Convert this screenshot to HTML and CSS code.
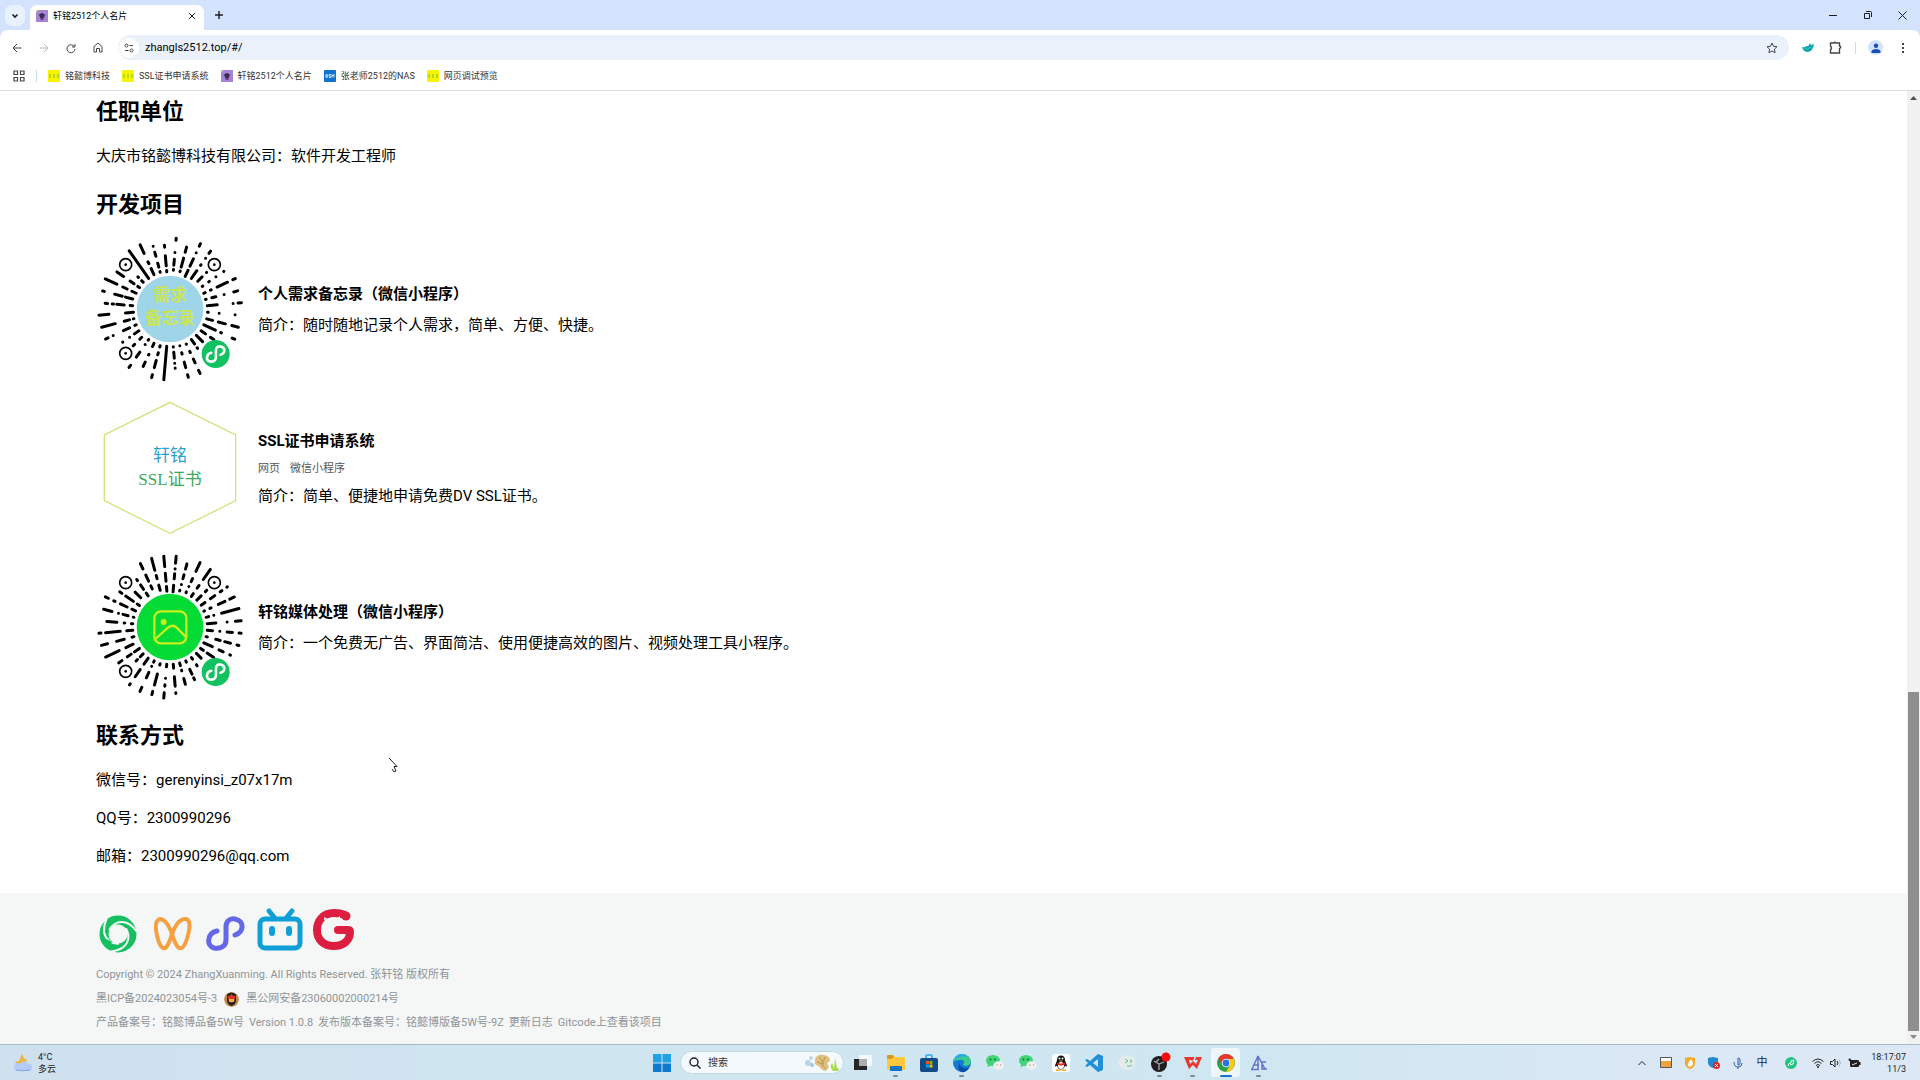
FILE: index.html
```html
<!DOCTYPE html>
<html lang="zh-CN">
<head>
<meta charset="utf-8">
<title>轩铭2512个人名片</title>
<link rel="stylesheet" href="styles.css">
</head>
<body>
<svg class="defs" aria-hidden="true">
  <symbol id="fav-yellow" viewBox="0 0 12 12"><rect width="12" height="12" rx="1" fill="#f6f400"/><path d="M1 5h2M1 7h2M2 4v4M5 5h2M5 7h2M6 4v4M9 5h2M9 7h2M10 4v4" stroke="#9cc83c" stroke-width=".8"/></symbol>
  <symbol id="fav-purple" viewBox="0 0 12 12"><rect width="12" height="12" fill="#a583d6"/><path d="M0 0h3L0 3z" fill="#b9c98c"/><path d="M2.500 5L6 3l3.500 2L6 7z" fill="#2b2140"/><circle cx="6" cy="6.500" r="2.300" fill="#3b2f50"/><path d="M4.500 8.500h3V10h-3z" fill="#6d3f7e"/></symbol>
  <symbol id="fav-dsm" viewBox="0 0 12 12"><rect width="12" height="12" rx="1" fill="#0d72d2"/><path d="M2 4.500v3h.8q1 0 1-1.500t-1-1.500zM6.800 4.500H5.200V6h1.500v1.500H5M8 7.500v-3l1 1.500 1-1.500v3" fill="none" stroke="#fff" stroke-width=".8"/></symbol>
  <symbol id="wechat" viewBox="0 0 18 18"><ellipse cx="7" cy="6.500" rx="7" ry="5.500" fill="#3fd476"/><path d="M2 10l-.5 3L5 11.500z" fill="#3fd476"/><circle cx="4.500" cy="5.500" r="1" fill="#17703c"/><circle cx="9" cy="5.500" r="1" fill="#17703c"/><ellipse cx="12.500" cy="11.500" rx="5.300" ry="4.300" fill="#eef1ee"/><circle cx="11" cy="11" r=".7" fill="#999"/><circle cx="14.500" cy="11" r=".7" fill="#999"/></symbol>
  <symbol id="mini-link" viewBox="-1 2 45 45"><path d="M13 22C3 24 2 37 10 39C17 40 22 37 22 31V18C22 13 25 9 31 10C41 12 40 23 31 26" fill="none" stroke="currentColor" stroke-width="5" stroke-linecap="round"/></symbol>
</svg>

<header class="browser">
  <div class="tabstrip">
    <button class="tab-search" aria-label="搜索标签页"><svg width="8" height="8" viewBox="0 0 8 8"><path d="M1.500 2.500L4 5l2.500-2.500" class="ln" stroke-width="1.600"/></svg></button>
    <div class="tab"><svg width="12" height="12"><use href="#fav-purple"/></svg><span>轩铭2512个人名片</span>
      <button aria-label="关闭"><svg width="8" height="8" viewBox="0 0 8 8"><path d="M1 1l6 6M7 1L1 7" class="ln"/></svg></button></div>
    <button class="new-tab" aria-label="新标签页"><svg width="10" height="10" viewBox="0 0 10 10"><path d="M5 1v8M1 5h8" class="ln" stroke-width="1.400"/></svg></button>
    <div class="window-controls">
      <button aria-label="最小化"><svg width="8" height="8" viewBox="0 0 8 8"><path d="M0 4.500h8" class="ln"/></svg></button>
      <button aria-label="还原"><svg width="8" height="8" viewBox="0 0 8 8"><path d="M.5 2.500h5v5h-5zM2 .5h4.500q1 0 1 1V6" class="ln"/></svg></button>
      <button aria-label="关闭窗口"><svg width="9" height="9" viewBox="0 0 9 9"><path d="M.5.5l8 8M8.500.5l-8 8" class="ln"/></svg></button>
    </div>
  </div>
  <form class="toolbar">
    <button type="button" aria-label="后退"><svg width="10" height="10" viewBox="0 0 10 10"><path d="M9.500 5H1M5 1L1 5l4 4" class="ln g"/></svg></button>
    <button type="button" aria-label="前进"><svg width="10" height="10" viewBox="0 0 10 10"><path d="M.5 5H9M5 1l4 4-4 4" class="ln off"/></svg></button>
    <button type="button" aria-label="重新加载"><svg width="10" height="10" viewBox="0 0 10 10"><path d="M9 1v3H6M8.600 4A4 4 0 1 0 9 6" class="ln g"/></svg></button>
    <button type="button" aria-label="主页"><svg width="10" height="11" viewBox="0 0 10 11"><path d="M1 4.500L5 1l4 3.500V10H6.500V6.500h-3V10H1z" class="ln g"/></svg></button>
    <div class="omnibox">
      <span class="site-info"><svg width="10" height="10" viewBox="0 0 10 10"><path d="M5.500 2.500H9M1 7.500h3.500" class="ln g"/><circle cx="2.500" cy="2.500" r="1.500" class="ln g"/><circle cx="7.500" cy="7.500" r="1.500" class="ln g"/></svg></span>
      <input aria-label="地址" value="zhangls2512.top/#/">
      <svg width="12" height="12" viewBox="0 0 12 12"><path d="M6 1l1.500 3.300 3.500.4-2.600 2.400.7 3.600L6 9l-3.100 1.700.7-3.600L1 4.700l3.500-.4z" class="ln g"/></svg>
    </div>
    <button type="button" class="ext" aria-label="扩展"><svg width="12" height="10" viewBox="0 0 12 10"><path d="M0 4q3 1 4-1 2 1 3-1l1-2 1 2 3-1Q11 8 6 9 1 9 0 4z" fill="#14a5b5"/><path d="M1 6q4 1 8-2" stroke="#2bc9a9" fill="none"/></svg></button>
    <button type="button" class="puzzle" aria-label="扩展程序"><svg width="13" height="13" viewBox="0 0 13 13"><path d="M1.500 2H5q1-1.500 2 0h3.500v3q2.500 1 0 2.500V12h-9V9q2-2 0-4z" class="ln g" stroke-width="1.400"/></svg></button>
    <span class="divider"></span>
    <button type="button" class="profile" aria-label="个人资料"><svg width="10" height="10" viewBox="0 0 10 10"><circle cx="5" cy="2.800" r="2.200" fill="#1a50b5"/><path d="M.5 10V8.500Q1 6 5 6t4.500 2.500V10z" fill="#1a50b5"/></svg></button>
    <button type="button" class="menu" aria-label="菜单"><svg width="4" height="12" viewBox="0 0 4 12"><path d="M1 1h2v2H1zM1 5h2v2H1zM1 9h2v2H1z" fill="#444746"/></svg></button>
  </form>
  <nav class="bookmarks">
    <button aria-label="应用"><svg width="12" height="12" viewBox="0 0 12 12"><path d="M1 1h3.500v3.500H1zM7.500 1H11v3.500H7.500zM1 7.500h3.500V11H1zM7.500 7.500H11V11H7.500z" class="ln g" stroke-width="1.200"/></svg></button>
    <span class="divider"></span>
    <a href="#"><svg width="12" height="12"><use href="#fav-yellow"/></svg>铭懿博科技</a>
    <a href="#"><svg width="12" height="12"><use href="#fav-yellow"/></svg>SSL证书申请系统</a>
    <a href="#"><svg width="12" height="12"><use href="#fav-purple"/></svg>轩铭2512个人名片</a>
    <a href="#"><svg width="12" height="12"><use href="#fav-dsm"/></svg>张老师2512的NAS</a>
    <a href="#"><svg width="12" height="12"><use href="#fav-yellow"/></svg>网页调试预览</a>
  </nav>
</header>

<div class="viewport">
  <div class="page">
    <main>
      <section>
        <h2>任职单位</h2>
        <p>大庆市铭懿博科技有限公司：软件开发工程师</p>
      </section>
      <section>
        <h2>开发项目</h2>
        <ul class="projects">
          <li>
            <svg class="cover" viewBox="-222 -222 444 444" data-code="memo"><g class="rays"></g>
              <circle r="100" fill="#9fd5e8"/>
              <text y="-24" class="memo-text">需求</text><text y="46" class="memo-text">备忘录</text>
              <g transform="translate(137 135)"><circle r="42" fill="#12c160"/><use href="#mini-link" x="-35" y="-35" width="70" height="70" color="#fff"/></g></svg>
            <div class="info"><h3>个人需求备忘录（微信小程序）</h3><p>简介：随时随地记录个人需求，简单、方便、快捷。</p></div>
          </li>
          <li>
            <svg class="cover" viewBox="-222 -222 444 444"><path d="M0-197L197-99V98L0 196L-197 98V-99z" fill="none" stroke="#cfe57a" stroke-width="4"/>
              <text y="-20" class="ssl-text blue">轩铭</text><text y="50" class="ssl-text green">SSL证书</text></svg>
            <div class="info"><h3>SSL证书申请系统</h3><div class="links"><a href="#">网页</a><a href="#">微信小程序</a></div><p>简介：简单、便捷地申请免费DV SSL证书。</p></div>
          </li>
          <li>
            <svg class="cover" viewBox="-222 -222 444 444" data-code="media"><g class="rays"></g>
              <circle r="100" fill="#04db34"/>
              <g fill="none" stroke="#c8f01e" stroke-width="7"><rect x="-47" y="-47" width="96" height="96" rx="20"/><path d="M-44 36L-6 2Q8-10 20 2L46 28" stroke-linecap="round"/></g><circle cx="-19" cy="-15" r="9" fill="#c8f01e"/>
              <g transform="translate(137 135)"><circle r="42" fill="#12c160"/><use href="#mini-link" x="-35" y="-35" width="70" height="70" color="#fff"/></g></svg>
            <div class="info"><h3>轩铭媒体处理（微信小程序）</h3><p>简介：一个免费无广告、界面简洁、使用便捷高效的图片、视频处理工具小程序。</p></div>
          </li>
        </ul>
      </section>
      <section>
        <h2>联系方式</h2>
        <p>微信号：gerenyinsi_z07x17m</p>
        <p>QQ号：2300990296</p>
        <p>邮箱：2300990296@qq.com</p>
      </section>
    </main>
    <footer>
      <div class="social">
        <a href="#" aria-label="公众号"><svg viewBox="0 0 45 45"><circle cx="22" cy="25" r="14" fill="none" stroke="#15c060" stroke-width="9"/><g fill="none" stroke="#f4f7f6" stroke-width="2"><path id="slit" d="M13 21Q20 10 31 14Q37 17 41 23"/><use href="#slit" transform="rotate(120 22 25)"/><use href="#slit" transform="rotate(240 22 25)"/></g><path d="M10 30v6l7-3z" fill="#15c060"/></svg></a>
        <a href="#" aria-label="视频号"><svg viewBox="0 0 45 45"><path d="M22 25C18 13 12 8 8 11C3 15 8 36 13 39C17 41 20 31 22 25S29 9 36 10C44 12 36 36 32 39C27 41 24 31 22 25" fill="none" stroke="#f5a143" stroke-width="4" stroke-linejoin="round"/></svg></a>
        <a href="#" aria-label="小程序"><svg viewBox="0 0 45 45"><path d="M13 22C3 24 2 37 10 39C17 40 22 37 22 31V18C22 13 25 9 31 10C41 12 40 23 31 26" fill="none" stroke="#6467e8" stroke-width="5" stroke-linecap="round"/></svg></a>
        <a href="#" aria-label="哔哩哔哩"><svg viewBox="0 0 45 45"><rect x="2" y="10" width="40" height="29" rx="5" fill="none" stroke="#10a0d8" stroke-width="5"/><path d="M11 2l5 6M34 2l-5 6" stroke="#10a0d8" stroke-width="5" stroke-linecap="round"/><path d="M14 20v4M31 20v4" stroke="#10a0d8" stroke-width="6" stroke-linecap="round"/></svg></a>
        <a href="#" aria-label="Gitcode"><svg viewBox="0 0 45 45"><path d="M33 6Q28 4 22 4C11 4 5 12 5 21C5 31 12 37 22 37C32 37 38 31 38 23Q38 21 36 21H26" fill="none" stroke="#dc1e40" stroke-width="8"/><circle cx="34" cy="7" r="4.500" fill="#dc1e40"/><circle cx="26" cy="21" r="4" fill="#dc1e40"/><path d="M8 16L12 7H20Q14 11 12 8L11 13z" fill="#dc1e40"/><path d="M12 11V8L16 10M24 10L28 7V11z" fill="#f4f7f6"/></svg></a>
      </div>
      <p>Copyright © 2024 ZhangXuanming. All Rights Reserved. 张轩铭 版权所有</p>
      <p class="records"><a href="#">黑ICP备2024023054号-3</a>
        <svg width="15" height="15" viewBox="0 0 15 15"><circle cx="7.500" cy="7.500" r="7.300" fill="#b98a4a"/><path d="M3 2.500Q7.500-1.500 12 2.500V9Q11 13 7.500 14 4 13 3 9z" fill="#23201f"/><path d="M7.500 1.500l1 2 3 .5-1 5-3 2-3-2-1-5 3-.5z" fill="#d8352b"/><path d="M5 7h5v3H5z" fill="#e7b23d"/></svg>
        <a href="#">黑公网安备23060002000214号</a></p>
      <p class="records versions"><span>产品备案号：铭懿博品备5W号</span><span>Version 1.0.8</span><span>发布版本备案号：铭懿博版备5W号-9Z</span><a href="#">更新日志</a><a href="#">Gitcode上查看该项目</a></p>
    </footer>
  </div>
  <div class="scrollbar" aria-hidden="true">
    <svg width="7" height="4" viewBox="0 0 7 4"><path d="M0 4l3.500-4L7 4z" fill="#505050"/></svg>
    <div class="track"><span class="thumb"></span></div>
    <svg width="7" height="4" viewBox="0 0 7 4"><path d="M0 0l3.500 4L7 0z" fill="#8a8a8a"/></svg>
  </div>
  <svg class="cursor" width="12" height="17" viewBox="0 0 12 17"><path d="M2 1v11l3-3 2 5 2-1-2-4h4z" fill="#fff"/><path d="M2 1l8 8.500M10 9.500H7l2 4.500-2 1-2-3" fill="none" stroke="#222"/></svg>
</div>

<div class="taskbar">
  <button class="weather"><svg width="18" height="18" viewBox="0 0 18 18"><path d="M8 0l2 4 3 2-2 4-7 1-3-3 4-1z" fill="#eeb340"/><path d="M4 17a4 4 0 0 1 0-8q2 0 2.500.5a4 4 0 0 1 7 0q4.500 0 4.500 4T14 17z" fill="#b3cbf6"/><path d="M2 16q6 1.500 14 0" stroke="#7f9fe4" fill="none"/></svg><span>4°C<br>多云</span></button>
  <div class="apps">
    <button aria-label="开始"><svg width="18" height="18" viewBox="0 0 18 18"><path d="M0 0h8.500v8.500H0zM9.500 0H18v8.500H9.500z" fill="#22a2e6"/><path d="M0 9.500h8.500V18H0zM9.500 9.500H18V18H9.500z" fill="#0f78cf"/></svg></button>
    <label class="search"><svg width="12" height="12" viewBox="0 0 12 12"><circle cx="5" cy="5" r="4" class="ln" stroke-width="1.400"/><path d="M8 8l3.500 3.500" class="ln" stroke-width="1.400"/></svg><input type="search" aria-label="搜索" placeholder="搜索">
      <svg width="34" height="18" viewBox="0 0 34 18"><circle cx="6" cy="4" r="2" fill="#b9d8ea"/><circle cx="3" cy="9" r="3" fill="#b9d4e8"/><circle cx="7" cy="11" r="2" fill="#9fc8de"/><path d="M10 5Q12 0 19 1q6 1 6 6l-3 2 2 4-3 4q-5-1-6-4l-5-3z" fill="#dfc07c"/><path d="M14 3l4 5M20 3l-3 8 4 4M12 8l7 2" stroke="#b8935a" fill="none"/><path d="M28 17q-4-4-1-8l2 5 1-10 2 10q3 0 1 3z" fill="#a8dc50"/></svg></label>
    <button aria-label="任务视图"><svg width="18" height="18" viewBox="0 0 18 18"><path d="M5 1h13v11H5z" fill="#f6f8fa"/><path d="M0 5h13v11H0z" fill="#262626"/><path d="M5 5h8v7H5z" fill="#aaaeb0"/></svg></button>
    <button class="open" aria-label="文件资源管理器"><svg width="18" height="18" viewBox="0 0 18 18"><path d="M0 2q0-1 1-1h5l2 2h9q1 0 1 1v12H0z" fill="#ffc83a"/><path d="M0 2q0-1 1-1h5l1 2-2 2H0z" fill="#d89a20"/><path d="M3 17v-4q0-1 1-1h10q1 0 1 1v4z" fill="#1775c4"/></svg></button>
    <button aria-label="商店"><svg width="18" height="18" viewBox="0 0 18 18"><path d="M6 5V2q0-1 1-1h4q1 0 1 1v3" fill="none" stroke="#29a8e6" stroke-width="1.500"/><rect y="4" width="18" height="14" rx="2" fill="#134b86"/><path d="M6 7h3v3H6z" fill="#f25022"/><path d="M9.500 7h3v3h-3z" fill="#7fba00"/><path d="M6 10.500h3v3H6z" fill="#00a4ef"/><path d="M9.500 10.500h3v3h-3z" fill="#ffb900"/></svg></button>
    <button class="open" aria-label="Edge"><svg width="18" height="18" viewBox="0 0 18 18"><circle cx="9" cy="9" r="9" fill="#127bd2"/><path d="M0 8Q2 0 9 0q9 1 9 8-1 4-6 4-3-1-1-3 0-4-5-3Q2 6 0 8z" fill="#3ccb8b"/><path d="M0 8Q2 0 9 0q4 0 6 3-5-2-9 1-4 0-6 4z" fill="#2daadf"/><path d="M7 8q-2 7 9 6-3 5-8 4-5-3-1-10z" fill="#0d4fa4"/></svg></button>
    <button aria-label="微信"><svg width="18" height="18"><use href="#wechat"/></svg></button>
    <button aria-label="微信开发"><svg width="18" height="18"><use href="#wechat"/></svg></button>
    <button aria-label="QQ"><svg width="18" height="18" viewBox="0 0 18 18"><rect width="18" height="18" rx="3" fill="#fff"/><path d="M9 1.500q4 0 4 5l2 5q0 2-2 0-1 4-4 4t-4-4q-2 2-2 0l2-5q0-5 4-5z" fill="#111"/><ellipse cx="9" cy="11.500" rx="3" ry="3.500" fill="#fff"/><path d="M5 8.500q4 2 8 0v2q-4 2-8 0z" fill="#e5251e"/><path d="M7 6.500h4L9 8zM4 15.500h4v1.500H4zM10 15.500h4v1.500h-4z" fill="#f5a51a"/><circle cx="7.500" cy="4.500" r="1" fill="#fff"/><circle cx="10.500" cy="4.500" r="1" fill="#fff"/></svg></button>
    <button aria-label="VS Code"><svg width="18" height="18" viewBox="0 0 18 18"><path d="M13 0l5 2v14l-5 2-8-7-3 2-2-1 3-3-3-3 2-1 3 2zM13 5L8 9l5 4z" fill="#2190d8" fill-rule="evenodd"/></svg></button>
    <button aria-label="助手"><svg width="18" height="18" viewBox="0 0 18 18"><ellipse cx="9" cy="8.500" rx="8.500" ry="7.500" fill="#e4ebe8"/><path d="M7 5l3 2-3 2M12 6l2 1-2 2M9 12q3 1 5-1" fill="none" stroke="#58c08a"/></svg></button>
    <button class="open" aria-label="OBS"><svg width="20" height="20" viewBox="0 0 20 20"><circle cx="9" cy="11" r="8" fill="#1f1d20"/><path d="M9 11V17M9 11L4 8M9 11l5-2M9 6l-3 3" stroke="#aaa" fill="none" stroke-width="1.300"/><circle cx="16" cy="4" r="4.500" fill="#f80b0b"/></svg></button>
    <button class="open" aria-label="WPS"><svg width="18" height="16" viewBox="0 0 18 16"><path d="M0 2h10v2L8 6 7 5H5l1 4 3-3 3 3 2-4h-3l1-3h6l-5 12-4-4-4 4z" fill="#e8392f"/></svg></button>
    <button class="open active" aria-label="Chrome"><svg width="18" height="18" viewBox="0 0 18 18"><circle cx="9" cy="9" r="9" fill="#2ca24c"/><path d="M9 9L1.200 4.500A9 9 0 0 1 16.800 4.500z" fill="#e6392e"/><path d="M9 5h7.800A9 9 0 0 1 9 18l4-7z" fill="#fbc718"/><path d="M1.200 4.500L5 11l4-6z" fill="#e6392e"/><circle cx="9" cy="9" r="4.300" fill="#fff"/><circle cx="9" cy="9" r="3.400" fill="#2b73e0"/></svg></button>
    <button class="open" aria-label="字体工具"><svg width="16" height="17" viewBox="0 0 16 17"><path d="M1 15L7 2v13M3 11h5M7 2l7 13M0 15.500h8M15 8h-4v7h5" fill="none" stroke="#6573c8" stroke-width="1.500"/></svg></button>
  </div>
  <div class="tray">
    <button aria-label="显示隐藏的图标"><svg width="8" height="6" viewBox="0 0 8 6"><path d="M.5 5L4 1.500 7.500 5" class="ln"/></svg></button>
    <button aria-label="窗口"><svg width="12" height="11" viewBox="0 0 12 11"><path d="M.5.5h11v10H.5z" fill="#fff" stroke="#555"/><path d="M1 4h10v6H1z" fill="#f0a23c"/></svg></button>
    <button aria-label="火绒"><svg width="10" height="12" viewBox="0 0 10 12"><path d="M0 1l5-1 5 1v6q-1 4-5 5-4-1-5-5z" fill="#f9a825"/><path d="M6 2q2 3 2 5-1 3-3 3-3-1-2-4z" fill="#fff"/></svg></button>
    <button aria-label="安全中心"><svg width="12" height="12" viewBox="0 0 12 12"><path d="M0 1l5-1 5 1v5q-1 4-5 5-4-1-5-5z" fill="#1e88d2"/><circle cx="8.500" cy="8.500" r="3.500" fill="#d82c2c"/><path d="M7 7l3 3M10 7l-3 3" stroke="#fff"/></svg></button>
    <button aria-label="麦克风"><svg width="10" height="12" viewBox="0 0 10 12"><path d="M5 1v7M5 1q2 0 2 2v3q0 2-2 2M1 5q0 5 4 5t4-4M5 10v2" fill="none" stroke="#2b5ba8"/></svg></button>
    <button class="ime">中</button>
    <button class="wide" aria-label="加速"><svg width="12" height="12" viewBox="0 0 12 12"><circle cx="6" cy="6" r="6" fill="#1fc582"/><path d="M3 9q0-3 3-3V4l3-1-1 4-3 1" fill="none" stroke="#fff"/></svg></button>
    <button class="status"><svg width="12" height="10" viewBox="0 0 12 10"><path d="M.5 3.500Q6-1.500 11.500 3.500M2.500 5.500Q6 2 9.500 5.500M4 7.500Q6 5.500 8 7.500" class="ln"/><circle cx="6" cy="9" r="1" fill="#222"/></svg><svg width="12" height="10" viewBox="0 0 12 10"><path d="M.5 3.500h2L5 1v8L2.500 6.500h-2zM7 3q2 2 0 4" class="ln"/><path d="M9 1.500q3 3.500 0 7" class="ln off"/></svg><svg width="13" height="10" viewBox="0 0 13 10"><rect x="2" y="2" width="9" height="7" rx="1" fill="#222"/><path d="M11.500 4v3M1 1l3 3" class="ln" stroke-width="2"/><path d="M4 7l5-2" stroke="#dde"/></svg></button>
    <button class="clock">18:17:07<br>11/3</button>
  </div>
</div>
<script src="codes.js"></script>
</body>
</html>
```
FILE: codes.js
```js
// Rays of each round code: angle in degrees -> list of [start, end] radii.
const codes = {
  memo: {
    5: [[207,213],[170,170],[132,150],[117,119]], 15: [[176,192],[130,158],[116,118]], 25: [[208,216],[186,186],[142,166],[108,128]],
    35: [[204,212],[186,186],[160,162],[112,140]], 45: [[155,155],[118,136]], 55: [[197,197],[168,168],[142,144],[118,120]],
    65: [[208,216],[156,190],[134,136],[112,116]], 75: [[198,210],[168,168],[130,142],[110,112]], 85: [[205,215],[190,190],[112,142]],
    95: [[196,196],[148,148],[113,115]], 105: [[192,212],[150,172],[114,132]], 115: [[206,214],[168,170],[112,150]],
    125: [[148,160],[114,130]], 135: [[112,138]], 145: [[142,144],[112,128]], 155: [[203,213],[166,178],[140,144],[116,116]],
    165: [[204,212],[165,182],[136,140],[114,114]], 175: [[178,178],[163,163],[130,148],[114,114]], 185: [[112,213]],
    195: [[204,213],[160,182],[136,142],[114,118]], 205: [[176,190],[150,152],[114,124]], 215: [[206,214],[158,176],[130,130],[112,114]],
    225: [[150,156],[120,128]], 235: [[173,173],[148,148],[114,130]], 245: [[205,213],[188,188],[134,154],[112,116]],
    255: [[170,212],[126,142],[112,114]], 265: [[184,214],[110,134]], 275: [[188,195],[170,174],[138,160],[112,120]],
    285: [[204,209],[148,172],[116,138]], 295: [[176,214],[142,156],[112,126]], 305: [[170,194],[132,146],[112,118]],
    315: [[134,136],[114,120]], 325: [[112,213]], 335: [[184,212],[150,156],[114,134]], 345: [[195,195],[164,176],[130,142],[114,116]],
    355: [[186,192],[130,160],[112,116]]
  },
  media: {
    5: [[192,213],[175,175],[145,160],[106,126]], 15: [[180,196],[150,162],[132,132],[112,114]], 25: [[184,213],[150,160],[134,134],[114,116]],
    35: [[174,211],[142,152],[112,122]], 45: [[150,156],[114,132]], 55: [[208,210],[184,190],[148,164],[114,128]],
    65: [[198,213],[160,182],[132,136],[112,114]], 75: [[160,214],[136,136],[112,120]], 85: [[197,214],[172,172],[112,138]],
    95: [[208,214],[172,188],[150,150],[112,128]], 105: [[208,214],[170,188],[142,156],[112,116]], 115: [[198,200],[162,176],[112,140]],
    125: [[136,160],[112,122]], 135: [[112,132]], 145: [[138,142],[112,118]], 155: [[168,174],[140,156],[112,116]],
    165: [[160,178],[134,136],[112,120]], 175: [[198,200],[150,178],[112,124]], 185: [[198,214],[174,178],[154,154],[112,120]],
    195: [[200,210],[146,180],[114,118]], 205: [[200,213],[150,168],[130,130],[112,116]], 215: [[208,212],[156,182],[114,136]],
    225: [[138,144],[114,126]], 235: [[176,188],[142,156],[112,130]], 245: [[168,213],[122,146]], 255: [[194,213],[142,166],[112,118]],
    265: [[208,214],[150,194],[112,130]], 275: [[160,190],[136,138],[112,116]], 285: [[180,206],[160,160],[130,146],[112,114]],
    295: [[204,214],[182,186],[142,164],[114,126]], 305: [[176,184],[134,162],[112,120]], 315: [[124,148]],
    325: [[170,174],[138,154],[114,124]], 335: [[192,210],[152,172],[126,136]], 345: [[176,213],[150,160],[114,130]],
    355: [[182,213],[138,162],[108,122]]
  }
};

document.querySelectorAll("[data-code]").forEach(svg => {
  let d = "";
  for (const [angle, dashes] of Object.entries(codes[svg.dataset.code])) {
    const a = angle * Math.PI / 180;
    const at = r => (r * Math.sin(a)).toFixed(1) + " " + (-r * Math.cos(a)).toFixed(1);
    for (const [from, to] of dashes) d += `M${at(from)}L${at(to + 0.1)}`;
  }
  let marks = `<path d="${d}"/>`;
  for (const [x, y] of [[-133, -133], [133, -133], [-133, 133]]) {
    marks += `<circle class="eye" cx="${x}" cy="${y}" r="18"/><circle class="pupil" cx="${x}" cy="${y}" r="4"/>`;
  }
  svg.querySelector(".rays").innerHTML = marks;
});
```
FILE: styles.css
```css
* { box-sizing: border-box; }
body {
  margin: 0;
  min-height: 100vh;
  display: flex;
  flex-direction: column;
  background: #fff;
  color: #000;
  font: 15px/20px Roboto, "Noto Sans CJK SC", sans-serif;
}
h2, h3, p, ul { margin: 0; padding: 0; }
button, input { border: 0; padding: 0; background: none; font: inherit; color: inherit; outline: 0; }
button { display: flex; align-items: center; justify-content: center; }
a { color: inherit; text-decoration: none; }
svg { flex: none; display: block; overflow: visible; }
.defs { position: absolute; width: 0; height: 0; }
.ln { fill: none; stroke: #1f1f1f; }
.ln.g { stroke: #444746; }
.ln.off { stroke: #b4b6b8; }
.divider { width: 1px; height: 12px; background: #c5dcf5; }

/* Browser frame */
.browser { font-size: 9px; line-height: 12px; background: #d3e2fd; border-bottom: 1px solid #dcdcdc; }
.tabstrip { display: flex; height: 30px; padding: 5px 0 0 5px; }
.tab-search { width: 20px; height: 21px; border-radius: 7px; background: #e9f1fe; }
.tab { display: flex; align-items: center; gap: 5px; width: 174px; margin-left: 5px; padding: 0 8px 4px 6px; border-radius: 7px 7px 0 0; background: #fff; }
.tab span { flex: 1; }
.new-tab { width: 20px; height: 20px; margin-left: 5px; }
.window-controls { display: flex; margin-left: auto; height: 20px; }
.window-controls button { width: 35px; }
.toolbar { display: flex; align-items: center; height: 35px; padding: 0 8px 0 3px; border-radius: 8px 8px 0 0; background: #fff; }
.toolbar > button { width: 27px; height: 25px; }
.omnibox { flex: 1; display: flex; align-items: center; height: 25px; margin: 0 5px 0 7px; padding: 0 11px 0 1px; border-radius: 13px; background: #ebf1fa; }
.omnibox input { flex: 1; min-width: 0; margin-left: 6px; font-size: 11px; line-height: 16px; }
.site-info { display: grid; place-items: center; width: 20px; height: 20px; border-radius: 50%; background: #fff; }
.toolbar .puzzle { width: 28px; }
.toolbar .divider { margin: 0 12px 0 6px; }
.toolbar .profile { width: 15px; height: 15px; border-radius: 50%; background: #d3e3fd; }
.toolbar .menu { width: 18px; margin-left: 11px; }
.bookmarks { display: flex; align-items: center; gap: 12px; height: 25px; padding: 0 13px 4px; background: #fff; color: #333; }
.bookmarks .divider { margin: 0 -1px; }
.bookmarks a { display: flex; align-items: center; gap: 5px; }

/* Page */
.viewport { position: relative; flex: 1; display: flex; }
.page { flex: 1; display: flex; flex-direction: column; }
main { flex: 1; padding: 5px 96px 26px; }
section { display: flex; flex-direction: column; gap: 18px; }
section + section { margin-top: 23px; }
section:last-child { margin-top: 19px; }
h2 { font-size: 22px; line-height: 32px; }
.projects { display: grid; gap: 11px; list-style: none; margin-top: -4px; }
.projects li { display: flex; align-items: center; gap: 14px; }
.cover { width: 148px; height: 148px; }
.info { display: grid; gap: 11px; }
.info:has(.links) { gap: 7px; }
h3 { font-size: 15px; line-height: 20px; }
.links { display: flex; gap: 10px; padding-top: 1px; font-size: 11px; line-height: 20px; color: #555; }
.rays path { fill: none; stroke: #000; stroke-width: 9px; stroke-linecap: round; }
.eye { fill: #fff; stroke: #000; stroke-width: 5px; }
.cover text { text-anchor: middle; }
.memo-text { font: bold 50px "Liberation Serif", "Noto Sans CJK SC", serif; fill: #cbe552; }
.ssl-text { font: 51px "Liberation Serif", "Noto Sans CJK SC", serif; }
.blue { fill: #2b9fd0; }
.green { fill: #3fa860; }

footer { padding: 16px 96px 9px; background: #f4f7f6; color: #909496; font-size: 11px; line-height: 24px; }
.social { display: flex; gap: 9px; margin-bottom: 9px; }
.social svg { width: 45px; height: 45px; }
.records { display: flex; align-items: center; gap: 7px; }
.versions { gap: 5px; }

.scrollbar { display: flex; flex-direction: column; align-items: center; width: 13px; padding: 5px 0; background: #f1f1f1; }
.track { flex: 1; width: 100%; padding: 4px 1px; display: flex; align-items: flex-end; }
.thumb { width: 100%; height: 36.6%; background: #8f8f8f; }
.cursor { position: absolute; left: 387px; top: 666px; }

/* Taskbar */
.taskbar { display: grid; grid-template-columns: 1fr auto 1fr; height: 36px; border-top: 1px solid #a5b9c6; background: linear-gradient(90deg, #cfe0ee, #cfe6f1 30%, #cfe7f2 65%, #dce8f5 90%); font-size: 9px; line-height: 12px; color: #222; }
.weather { justify-self: start; gap: 6px; padding-left: 14px; text-align: left; }
.apps, .tray { display: flex; align-items: center; }
.apps > button { position: relative; width: 33px; height: 35px; }
.open::after { content: ""; position: absolute; bottom: 3px; width: 5px; height: 2px; border-radius: 1px; background: #7e8b94; }
.apps .active { height: 29px; width: 29px; margin: 0 2px; border-radius: 3px; background: #eef6fa; }
.active::after { bottom: 0; width: 12px; background: #1a72c8; }
.search { display: flex; align-items: center; width: 164px; height: 23px; margin: 0 2px; padding: 0 4px 0 8px; border-radius: 12px; border: 1px solid #c2d6e0; background: #f3f9fc; }
.search input { flex: 1; min-width: 0; margin-left: 7px; font-size: 10px; }
.search input::placeholder { color: #333; opacity: 1; }
.tray { justify-self: end; padding-right: 14px; }
.tray button { width: 24px; height: 30px; }
.tray .ime { font-size: 11px; }
.tray .wide { width: 34px; }
.tray .status { width: 56px; gap: 6px; }
.tray .clock { display: block; width: 42px; height: auto; text-align: right; }
```
